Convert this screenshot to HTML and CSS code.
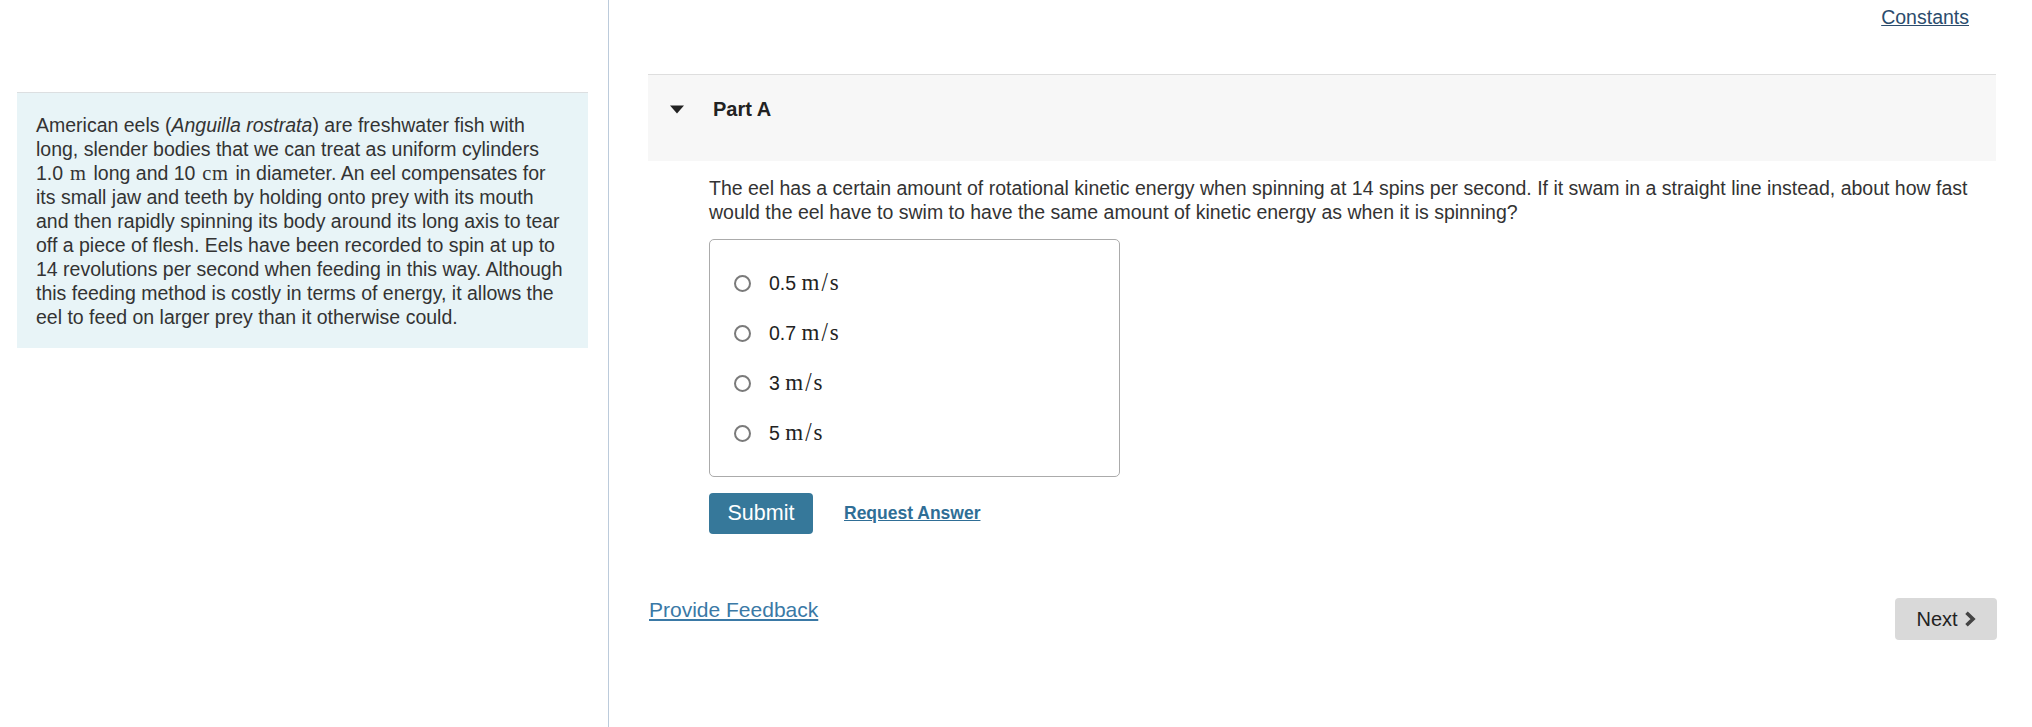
FILE: index.html
```html
<!DOCTYPE html>
<html>
<head>
<meta charset="utf-8">
<link rel="stylesheet" href="styles.css">
</head>
<body>
<div class="page">
  <div class="left">
    <div class="intro">American eels (<i>Anguilla rostrata</i>) are freshwater fish with long, slender bodies that we can treat as uniform cylinders 1.0 <span class="math">m</span> long and 10 <span class="math">cm</span> in diameter. An eel compensates for its small jaw and teeth by holding onto prey with its mouth and then rapidly spinning its body around its long axis to tear off a piece of flesh. Eels have been recorded to spin at up to 14 revolutions per second when feeding in this way. Although this feeding method is costly in terms of energy, it allows the eel to feed on larger prey than it otherwise could.</div>
  </div>
  <div class="right">
    <div class="toolbar"><a class="constants" href="#">Constants</a></div>
    <div class="part-head">
      <svg class="caret" width="16" height="9" viewBox="0 0 16 9"><polygon points="1,0.5 15,0.5 8,8.5" fill="#222"/></svg>
      <span class="part-title">Part A</span>
    </div>
    <div class="part-body">
      <p class="question">The eel has a certain amount of rotational kinetic energy when spinning at 14 spins per second. If it swam in a straight line instead, about how fast would the eel have to swim to have the same amount of kinetic energy as when it is spinning?</p>
      <div class="choices">
        <label class="choice"><span class="radio"></span><span class="label">0.5 <span class="unit">m<span class="slash">/</span>s</span></span></label>
        <label class="choice"><span class="radio"></span><span class="label">0.7 <span class="unit">m<span class="slash">/</span>s</span></span></label>
        <label class="choice"><span class="radio"></span><span class="label">3 <span class="unit">m<span class="slash">/</span>s</span></span></label>
        <label class="choice"><span class="radio"></span><span class="label">5 <span class="unit">m<span class="slash">/</span>s</span></span></label>
      </div>
      <div class="actions">
        <button class="submit">Submit</button>
        <a class="request" href="#">Request Answer</a>
      </div>
    </div>
    <div class="footer">
      <a class="feedback" href="#">Provide Feedback</a>
      <button class="next">Next <svg class="chev" width="12" height="16" viewBox="0 0 12 16"><polyline points="2.5,1.8 9,8 2.5,14.2" fill="none" stroke="#444" stroke-width="3.6"/></svg></button>
    </div>
  </div>
</div>
</body>
</html>
```
FILE: styles.css
```css
html, body {
  margin: 0;
  padding: 0;
  background: #fff;
}
body {
  font-family: "Liberation Sans", Arial, sans-serif;
  color: #333;
}
.page {
  display: flex;
  height: 727px;
}
.left {
  width: 609px;
  box-sizing: border-box;
  border-right: 1px solid #bccbdb;
  padding: 92px 20px 0 17px;
  flex: none;
}
.intro {
  background: #e8f4f7;
  border-top: 1px solid #dcdfe1;
  padding: 20px 25px 19px 19px;
  font-size: 19.5px;
  line-height: 24px;
}
.math {
  font-family: "Liberation Serif", "Times New Roman", serif;
  font-size: 20.5px;
  line-height: 1;
  letter-spacing: 0.6px;
  margin: 0 1.5px;
}
.right {
  flex: 1;
  padding: 0 36px 0 39px;
  min-width: 0;
}
.toolbar {
  display: flex;
  justify-content: flex-end;
  padding: 5px 27px 0 0;
  height: 69px;
}
.constants {
  font-size: 19.5px;
  line-height: 24px;
  height: 24px;
  color: #2b4c6d;
}
.part-head {
  border-top: 1px solid #dedede;
  background: #f7f7f7;
  height: 86px;
  display: flex;
  align-items: flex-start;
}
.caret {
  margin: 30px 0 0 21px;
  flex: none;
}
.part-title {
  margin: 22px 0 0 28px;
  font-weight: bold;
  font-size: 20px;
  line-height: 24px;
  color: #222;
}
.part-body {
  padding-left: 61px;
}
.question {
  margin: 15px 0 0 0;
  font-size: 19.5px;
  line-height: 24px;
}
.choices {
  margin-top: 15px;
  width: 411px;
  height: 238px;
  box-sizing: border-box;
  border: 1px solid #ababab;
  border-radius: 5px;
  padding: 18px 0;
  display: flex;
  flex-direction: column;
}
.choice {
  height: 50px;
  display: flex;
  align-items: center;
}
.radio {
  width: 17px;
  height: 17px;
  box-sizing: border-box;
  border: 2px solid #7a7a7a;
  border-radius: 50%;
  margin-left: 24px;
  flex: none;
}
.label {
  margin-left: 18px;
  font-size: 19.5px;
  line-height: 24px;
  color: #222;
}
.unit {
  font-family: "Liberation Serif", "Times New Roman", serif;
  font-size: 23px;
  line-height: 1;
}
.slash {
  display: inline-block;
  margin: 0 2px;
  transform: scaleY(1.15);
}
.actions {
  margin-top: 16px;
  display: flex;
  align-items: center;
}
.submit {
  width: 104px;
  height: 41px;
  background: #36789a;
  border: none;
  border-radius: 4px;
  color: #fff;
  font-family: "Liberation Sans", Arial, sans-serif;
  font-size: 21.5px;
  padding: 0;
}
.request {
  margin-left: 31px;
  font-size: 17.5px;
  font-weight: bold;
  color: #2f6e96;
}
.footer {
  margin-top: 64px;
  display: flex;
  justify-content: space-between;
  align-items: flex-start;
}
.feedback {
  margin-left: 1px;
  font-size: 21px;
  line-height: 24px;
  color: #3a79a6;
}
.next {
  width: 102px;
  height: 42px;
  background: #d9d9d9;
  border: none;
  border-radius: 4px;
  color: #222;
  font-family: "Liberation Sans", Arial, sans-serif;
  font-size: 20px;
  padding: 0;
  display: flex;
  align-items: center;
  justify-content: center;
  gap: 6px;
  margin-right: -1px;
}
.chev {
  flex: none;
}
```
